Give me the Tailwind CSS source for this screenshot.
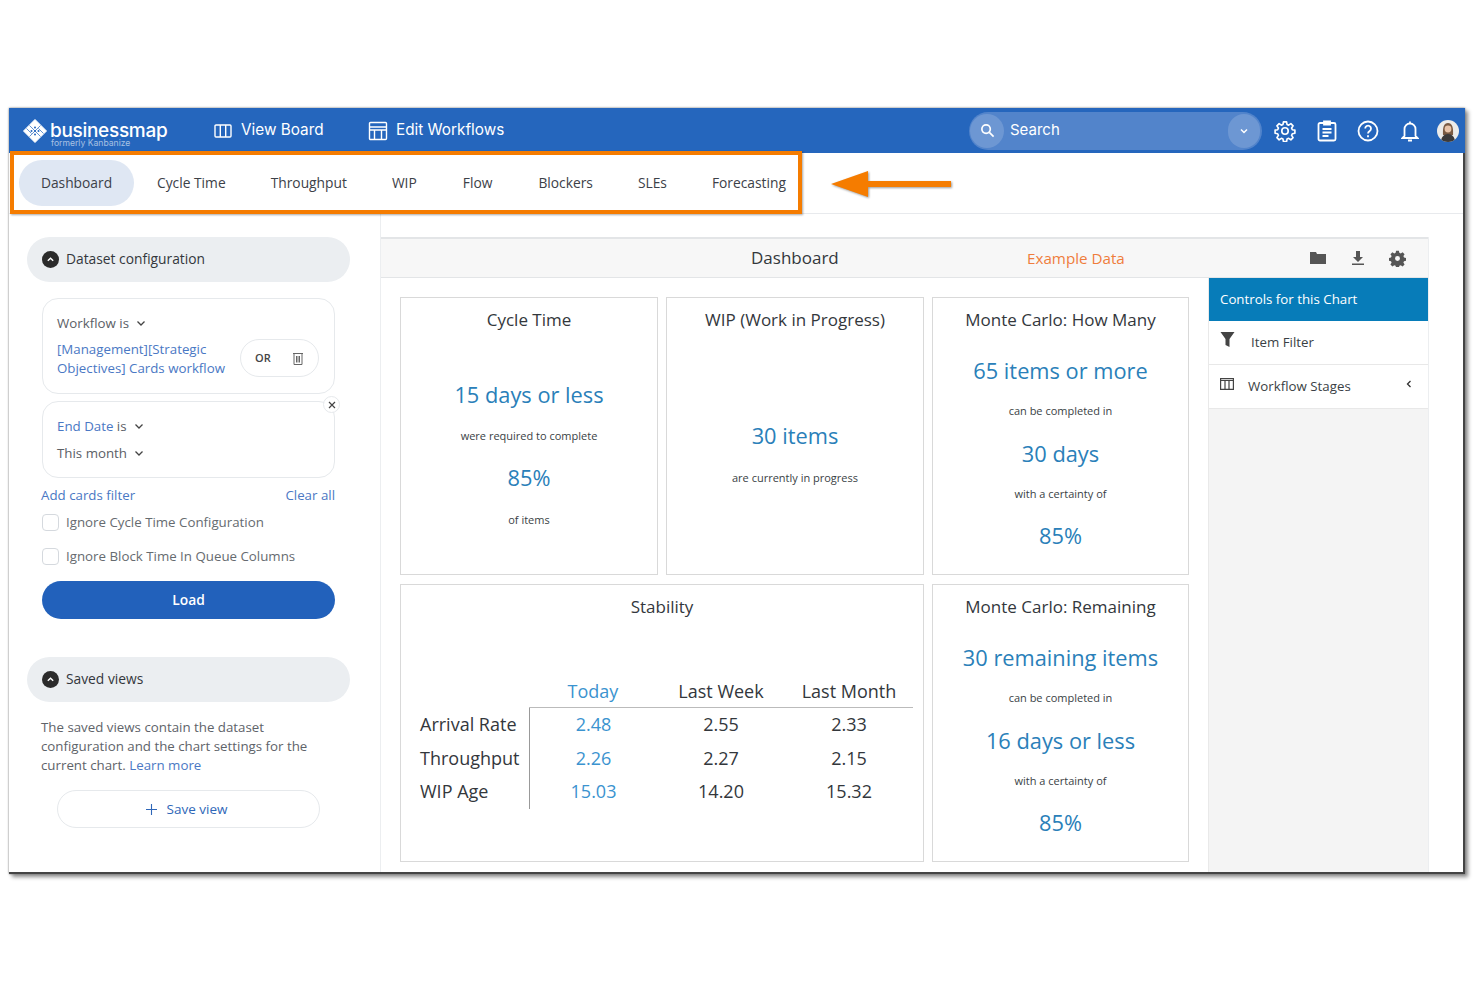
<!DOCTYPE html>
<html lang="en">
<head>
  <meta charset="UTF-8">
  <meta name="viewport" content="width=device-width, initial-scale=1.0">
  <title>Businessmap Analytics</title>
  <script src="https://cdn.jsdelivr.net/npm/@tailwindcss/browser@4"></script>
</head>
<body class="bg-white min-h-screen font-['Open_Sans',sans-serif] text-[#3a3f45]">
  <div class="pt-[108px] pl-[9px]">
    <div class="relative w-[1456px] h-[766px] bg-white flex flex-col shadow-[0_0_2px_#777,3px_3px_4px_rgba(0,0,0,0.45)]">

      <!-- Top bar -->
      <div class="h-[45px] bg-[#2566bd] flex items-center text-white shrink-0 font-['Inter',sans-serif]">
        <div class="flex items-center ml-[14px] w-[175px]">
          <svg class="w-[24px] h-[24px] shrink-0" viewBox="0 0 24 24">
            <path d="M12 .5L23.500 12 12 23.500.5 12z" fill="#fff" stroke="#fff" stroke-linejoin="round"/>
            <path d="M6.500 6.500l11 11M17.500 6.500l-11 11M3.500 9.500l5 5M15.500 9.500l5 5" stroke="#2566bd" stroke-width=".7"/>
            <g fill="#2566bd"><circle cx="12" cy="8.500" r="1"/><circle cx="12" cy="15.500" r="1"/><circle cx="8.500" cy="12" r="1"/><circle cx="15.500" cy="12" r="1"/><circle cx="12" cy="12" r="1"/></g>
          </svg>
          <div class="ml-[3px] pt-[8px]">
            <div class="text-[19px] tracking-[-0.3px] leading-[17px] font-medium">businessmap</div>
            <div class="text-[8.600px] leading-[9px] text-white/60 pl-px">formerly Kanbanize</div>
          </div>
        </div>
        <div class="flex items-center ml-[16px] gap-[9px] w-[154px]">
          <svg class="w-[18px] h-[18px]" viewBox="0 0 18 18" fill="none" stroke="#fff" stroke-width="1.400"><rect x="1" y="3" width="16" height="12" rx="1"/><path d="M6.300 3v12M11.700 3v12"/></svg>
          <span class="text-[15.300px]">View Board</span>
        </div>
        <div class="flex items-center gap-[8px]">
          <svg class="w-[20px] h-[20px]" viewBox="0 0 20 20" fill="none" stroke="#fff" stroke-width="1.400"><rect x="1.500" y="1.500" width="17" height="17" rx="1"/><path d="M1.500 6h17M6.500 9v9.500M13.500 9v9.500M1.500 9h17"/></svg>
          <span class="text-[15.300px]">Edit Workflows</span>
        </div>
        <div class="ml-auto flex items-center">
          <div class="w-[293px] h-[38px] rounded-full bg-[#5284cb] flex items-center">
            <div class="w-[34px] h-[34px] ml-[1px] rounded-full bg-[#6d97d3] flex items-center justify-center">
              <svg class="w-[15px] h-[15px]" viewBox="0 0 16 16" fill="none" stroke="#fff" stroke-width="1.800"><circle cx="6.500" cy="6.500" r="4.500"/><path d="M10 10l4.500 4.500"/></svg>
            </div>
            <span class="ml-[6px] text-[15px]">Search</span>
            <div class="ml-auto mr-[2px] w-[32px] h-[34px] rounded-full bg-[#6d97d3] flex items-center justify-center">
              <svg class="w-[10px] h-[10px]" viewBox="0 0 10 10" fill="none" stroke="#fff" stroke-width="1.500"><path d="M2 3.500l3 3 3-3"/></svg>
            </div>
          </div>
          <svg class="ml-[12px] w-[22px] h-[22px]" viewBox="0 0 24 24" fill="none" stroke="#fff" stroke-width="1.800" stroke-linejoin="round"><path d="M10.300 2h3.400l.5 2.800 1.800.8 2.400-1.600 2.400 2.400-1.600 2.400.8 1.800 2.800.5v3.400l-2.800.5-.8 1.800 1.600 2.400-2.400 2.400-2.400-1.600-1.800.8-.5 2.800h-3.400l-.5-2.800-1.800-.8-2.400 1.600-2.400-2.400 1.600-2.400-.8-1.800-2.800-.5v-3.400l2.800-.5.8-1.800-1.600-2.400 2.400-2.400 2.400 1.600 1.800-.8z"/><circle cx="12" cy="12" r="3.500"/></svg>
          <svg class="ml-[21px] w-[20px] h-[22px]" viewBox="0 0 20 22" fill="none" stroke="#fff" stroke-width="1.800"><rect x="1.500" y="3" width="17" height="17.500" rx="1.500"/><path d="M7 1.500h6v3H7zM5.500 9h9M5.500 12.500h9M5.500 16h6"/></svg>
          <svg class="ml-[20px] w-[22px] h-[22px]" viewBox="0 0 22 22" fill="none" stroke="#fff" stroke-width="1.800"><circle cx="11" cy="11" r="9.500"/><path d="M8.200 8.500a2.900 2.900 0 1 1 4.500 2.400c-1 .7-1.700 1.200-1.700 2.600"/><path d="M11 15.200v2"/></svg>
          <svg class="ml-[22px] w-[18px] h-[22px]" viewBox="0 0 18 22" fill="none" stroke="#fff" stroke-width="1.800"><path d="M3.500 16V9a5.500 5.500 0 0 1 11 0v7l2 2h-15zM7 20.500h4M9 1.500v2"/></svg>
          <svg class="ml-[18px] mr-[6px] w-[22px] h-[22px] rounded-full" viewBox="0 0 22 22"><rect width="22" height="22" fill="#ecebe9"/><path d="M6 15c-.5-8 1-12 5-12s5.500 4 5 12z" fill="#7a5a42"/><circle cx="11" cy="9" r="3.400" fill="#e8c3a8"/><path d="M4 22c0-5 3-8 7-8s7 3 7 8z" fill="#3c3a3a"/></svg>
        </div>
      </div>

      <!-- Tabs -->
      <div class="h-[61px] border-b border-[#e8eaed] flex items-center shrink-0 pl-[10px] text-[13.800px] font-medium text-[#3c4148]">
        <div class="h-[46px] w-[115px] rounded-full bg-[#dfe7f3] flex items-center justify-center mr-[23px]">Dashboard</div>
        <span class="mr-[45px]">Cycle Time</span>
        <span class="mr-[45px]">Throughput</span>
        <span class="mr-[46px]">WIP</span>
        <span class="mr-[46px]">Flow</span>
        <span class="mr-[45px]">Blockers</span>
        <span class="mr-[45px]">SLEs</span>
        <span>Forecasting</span>
      </div>

      <!-- Highlight overlay -->
      <div class="absolute left-[1px] top-[43px] w-[792px] h-[63px] border-[4px] border-[#f57c00] shadow-[1px_1px_2px_rgba(0,0,0,0.35)]"></div>
      <svg class="absolute left-[822px] top-[62px] w-[122px] h-[28px] drop-shadow-[1px_1px_1px_rgba(0,0,0,0.4)]" viewBox="0 0 122 28"><path d="M0 14L37 1v10h83v6H37v10z" fill="#f57c00"/></svg>

      <div class="flex flex-1 min-h-0">
        <!-- Sidebar -->
        <div class="w-[372px] border-r border-[#eceef0] pl-[18px] pt-[23px] shrink-0">
          <div class="w-[323px] h-[45px] rounded-full bg-[#ebeef1] flex items-center pl-[15px]">
            <span class="w-[17px] h-[17px] rounded-full bg-[#2b2b2b] flex items-center justify-center"><svg class="w-[9px] h-[9px]" viewBox="0 0 10 10" fill="none" stroke="#fff" stroke-width="1.600"><path d="M2 6.500l3-3 3 3"/></svg></span>
            <span class="ml-[7px] text-[13.800px] font-medium text-[#33373c]">Dataset configuration</span>
          </div>

          <div class="ml-[15px] w-[293px]">
            <div class="mt-[16px] h-[96px] rounded-[16px] border border-[#e6e9ec] px-[14px] pt-[14px] relative">
              <div class="flex items-center text-[13.300px] leading-[20px] text-[#5b6066]">Workflow is
                <svg class="ml-[7px] w-[10px] h-[10px]" viewBox="0 0 10 10" fill="none" stroke="#444" stroke-width="1.300"><path d="M1.500 3.500L5 7l3.500-3.500"/></svg>
              </div>
              <div class="flex items-center mt-[7px]">
                <div class="w-[183px] text-[13.300px] leading-[19px] text-[#4a78c4]">[Management][Strategic Objectives] Cards workflow</div>
                <div class="w-[79px] h-[38px] rounded-full border border-[#e6e9ec] flex items-center justify-between px-[14px] -mt-[2px]">
                  <span class="text-[11px] font-semibold text-[#444]">OR</span>
                  <svg class="w-[12px] h-[13px]" viewBox="0 0 12 13" fill="none" stroke="#666" stroke-width="1"><path d="M1 1.500h10M2 1.500v11h8v-11M4.500 4v6.500M6 4v6.500M7.500 4v6.500"/></svg>
                </div>
              </div>
            </div>
            <div class="mt-[7px] h-[77px] rounded-[16px] border border-[#e6e9ec] px-[14px] pt-[14px] relative">
              <div class="flex items-center text-[13.300px] leading-[20px] text-[#5b6066]"><span class="text-[#4a78c4]">End Date</span>&nbsp;is
                <svg class="ml-[7px] w-[10px] h-[10px]" viewBox="0 0 10 10" fill="none" stroke="#444" stroke-width="1.300"><path d="M1.500 3.500L5 7l3.500-3.500"/></svg>
              </div>
              <div class="flex items-center mt-[7px] text-[13.300px] leading-[20px] text-[#5b6066]">This month
                <svg class="ml-[7px] w-[10px] h-[10px]" viewBox="0 0 10 10" fill="none" stroke="#444" stroke-width="1.300"><path d="M1.500 3.500L5 7l3.500-3.500"/></svg>
              </div>
              <div class="absolute -top-[6px] -right-[6px] w-[17px] h-[17px] rounded-full bg-white border border-[#e6e9ec] flex items-center justify-center">
                <svg class="w-[8px] h-[8px]" viewBox="0 0 8 8" stroke="#444" stroke-width="1.200"><path d="M1 1l6 6M7 1L1 7"/></svg>
              </div>
            </div>
            <div class="flex justify-between mt-[7px] -ml-px text-[13.300px] leading-[20px] text-[#4a78c4]">
              <span>Add cards filter</span><span>Clear all</span>
            </div>
            <div class="flex items-center mt-[7px] text-[13.300px] leading-[20px] text-[#666b70]">
              <span class="w-[17px] h-[17px] rounded-[4px] border border-[#d5d9de] mr-[7px]"></span>Ignore Cycle Time Configuration
            </div>
            <div class="flex items-center mt-[14px] text-[13.300px] leading-[20px] text-[#666b70]">
              <span class="w-[17px] h-[17px] rounded-[4px] border border-[#d5d9de] mr-[7px]"></span>Ignore Block Time In Queue Columns
            </div>
            <div class="mt-[15px] h-[38px] rounded-full bg-[#2261bb] text-white text-[13.800px] font-semibold flex items-center justify-center">Load</div>
          </div>

          <div class="mt-[38px] w-[323px] h-[45px] rounded-full bg-[#ebeef1] flex items-center pl-[15px]">
            <span class="w-[17px] h-[17px] rounded-full bg-[#2b2b2b] flex items-center justify-center"><svg class="w-[9px] h-[9px]" viewBox="0 0 10 10" fill="none" stroke="#fff" stroke-width="1.600"><path d="M2 6.500l3-3 3 3"/></svg></span>
            <span class="ml-[7px] text-[13.800px] font-medium text-[#33373c]">Saved views</span>
          </div>
          <p class="ml-[14px] w-[296px] mt-[16px] text-[13.300px] leading-[19px] text-[#5e6369]">The saved views contain the dataset configuration and the chart settings for the current chart. <span class="text-[#4a78c4]">Learn more</span></p>
          <div class="ml-[30px] mt-[15px] w-[263px] h-[38px] rounded-full border border-[#e6e9ec] flex items-center justify-center pr-[4px] text-[13.500px] font-medium text-[#2f67b8]">
            <svg class="w-[11px] h-[11px] mr-[10px]" viewBox="0 0 11 11" stroke="#2f67b8" stroke-width="1.100"><path d="M5.500 0v11M0 5.500h11"/></svg>Save view
          </div>
        </div>

        <!-- Main panel -->
        <div class="flex-1 pt-[23px] pr-[36px] min-w-0">
          <div class="h-full flex flex-col border-r border-[#eceef0]">
            <div class="h-[41px] bg-[#f7f7f7] border-t-2 border-b border-[#e3e5e7] flex items-center shrink-0 relative">
              <span class="absolute left-[370px] text-[17px] text-[#33373c]">Dashboard</span>
              <span class="absolute left-[646px] text-[15.200px] text-[#ef7d3c]">Example Data</span>
              <div class="ml-auto flex items-center text-[#555]">
                <svg class="w-[18px] h-[14px]" viewBox="0 0 18 14" fill="#555"><path d="M1 1h6l1 2h9v10H1z"/></svg>
                <svg class="ml-[23px] w-[16px] h-[16px]" viewBox="0 0 16 16" fill="#555"><path d="M6 1h4v6h3l-5 5-5-5h3zM2 13.500h12V15H2z"/></svg>
                <svg class="ml-[23px] mr-[22px] w-[17px] h-[17px]" viewBox="0 0 24 24" fill="#555"><path fill-rule="evenodd" d="M10 1h4l.6 3 2 .9 2.600-1.700 2.800 2.800-1.700 2.600.9 2 3 .6v4l-3 .6-.9 2 1.700 2.600-2.800 2.800-2.600-1.700-2 .9-.6 3h-4l-.6-3-2-.9-2.600 1.700-2.800-2.800 1.700-2.600-.9-2-3-.6v-4l3-.6.9-2-1.700-2.600 2.800-2.800 2.600 1.700 2-.9zM12 8.500a3.500 3.500 0 1 0 0 7 3.500 3.500 0 0 0 0-7z"/></svg>
              </div>
            </div>
            <div class="flex flex-1 min-h-0">
              <!-- Cards -->
              <div class="w-[827px] pl-[19px] pt-[19px] shrink-0 grid grid-cols-[258px_258px_257px] grid-rows-[278px_278px] gap-x-[8px] gap-y-[9px] text-center">
                <div class="border border-[#d9d9d9] pt-[10px]">
                  <div class="text-[17px] leading-[24px] text-[#33373c]">Cycle Time</div>
                  <div class="mt-[42px] text-[21.800px] leading-[41.500px] text-[#2a80b9]">15 days or less</div>
                  <div class="text-[11px] leading-[41.500px] -translate-y-px">were required to complete</div>
                  <div class="text-[21.800px] leading-[41.500px] text-[#2a80b9]">85%</div>
                  <div class="text-[11px] leading-[41.500px]">of items</div>
                </div>
                <div class="border border-[#d9d9d9] pt-[10px]">
                  <div class="text-[17px] leading-[24px] text-[#33373c]">WIP (Work in Progress)</div>
                  <div class="mt-[83px] text-[21.800px] leading-[41.500px] text-[#2a80b9]">30 items</div>
                  <div class="text-[11px] leading-[41.500px]">are currently in progress</div>
                </div>
                <div class="border border-[#d9d9d9] pt-[10px]">
                  <div class="text-[17px] leading-[24px] text-[#33373c]">Monte Carlo: How Many</div>
                  <div class="mt-[18px] text-[21.800px] leading-[41.300px] text-[#2a80b9]">65 items or more</div>
                  <div class="text-[11px] leading-[41.300px] -translate-y-px">can be completed in</div>
                  <div class="text-[21.800px] leading-[41.300px] text-[#2a80b9]">30 days</div>
                  <div class="text-[11px] leading-[41.300px] -translate-y-px">with a certainty of</div>
                  <div class="text-[21.800px] leading-[41.300px] text-[#2a80b9]">85%</div>
                </div>
                <div class="col-span-2 border border-[#d9d9d9] pt-[10px]">
                  <div class="text-[17px] leading-[24px] text-[#33373c]">Stability</div>
                  <div class="mt-[56px] ml-[19px] grid grid-cols-[109px_128px_128px_128px] text-[18px] text-[#33373c]">
                    <div></div>
                    <div class="h-[33px] leading-[32px] text-[#3b93cf] border-b border-[#bbb]">Today</div>
                    <div class="h-[33px] leading-[32px] border-b border-[#bbb]">Last Week</div>
                    <div class="h-[33px] leading-[32px] border-b border-[#bbb]">Last Month</div>
                    <div class="h-[33.500px] leading-[33.500px] text-left">Arrival Rate</div>
                    <div class="h-[33.500px] leading-[33.500px] text-[#3b93cf] border-l border-[#999]">2.48</div>
                    <div class="h-[33.500px] leading-[33.500px]">2.55</div>
                    <div class="h-[33.500px] leading-[33.500px]">2.33</div>
                    <div class="h-[33.500px] leading-[33.500px] text-left">Throughput</div>
                    <div class="h-[33.500px] leading-[33.500px] text-[#3b93cf] border-l border-[#999]">2.26</div>
                    <div class="h-[33.500px] leading-[33.500px]">2.27</div>
                    <div class="h-[33.500px] leading-[33.500px]">2.15</div>
                    <div class="h-[33.500px] leading-[33.500px] text-left">WIP Age</div>
                    <div class="h-[33.500px] leading-[33.500px] text-[#3b93cf] border-l border-[#999]">15.03</div>
                    <div class="h-[33.500px] leading-[33.500px]">14.20</div>
                    <div class="h-[33.500px] leading-[33.500px]">15.32</div>
                  </div>
                </div>
                <div class="border border-[#d9d9d9] pt-[10px]">
                  <div class="text-[17px] leading-[24px] text-[#33373c]">Monte Carlo: Remaining</div>
                  <div class="mt-[18px] text-[21.800px] leading-[41.300px] text-[#2a80b9]">30 remaining items</div>
                  <div class="text-[11px] leading-[41.300px] -translate-y-px">can be completed in</div>
                  <div class="text-[21.800px] leading-[41.300px] text-[#2a80b9]">16 days or less</div>
                  <div class="text-[11px] leading-[41.300px] -translate-y-px">with a certainty of</div>
                  <div class="text-[21.800px] leading-[41.300px] text-[#2a80b9]">85%</div>
                </div>
              </div>
              <!-- Controls -->
              <div class="flex-1 bg-[#f4f4f4] border-l border-[#e9e9e9]">
                <div class="h-[43px] bg-[#077cb9] text-white text-[13.300px] flex items-center pl-[11px]">Controls for this Chart</div>
                <div class="h-[44px] bg-white border-b border-[#e8e8e8] flex items-center text-[13.300px] pl-[11px]">
                  <svg class="w-[15px] h-[15px] -mt-[6px]" viewBox="0 0 15 15" fill="#444"><path d="M.5 0h14L9.500 7v8l-4-2V7z"/></svg>
                  <span class="ml-[16px]">Item Filter</span>
                </div>
                <div class="h-[44px] bg-white border-b border-[#e8e8e8] flex items-center text-[13.300px] pl-[11px] pr-[15px]">
                  <svg class="w-[14px] h-[12px] -mt-[5px]" viewBox="0 0 14 12" fill="none" stroke="#444" stroke-width="1.200"><path d="M.6.600h12.800v10.800H.6zM.6 2.500h12.800" /><path d="M5 2.500v9M9 2.500v9"/></svg>
                  <span class="ml-[14px]">Workflow Stages</span>
                  <svg class="ml-auto -mt-[5px] w-[8px] h-[8px]" viewBox="0 0 8 8" fill="none" stroke="#333" stroke-width="1.300"><path d="M5.500 1L2.500 4l3 3"/></svg>
                </div>
              </div>
            </div>
          </div>
        </div>
      </div>

      <!-- Screenshot frame edge -->
      <div class="absolute right-0 top-[45px] bottom-0 w-[2px] bg-[#444]"></div>
      <div class="absolute left-0 right-0 bottom-0 h-[2px] bg-[#444]"></div>
    </div>
  </div>
</body>
</html>
